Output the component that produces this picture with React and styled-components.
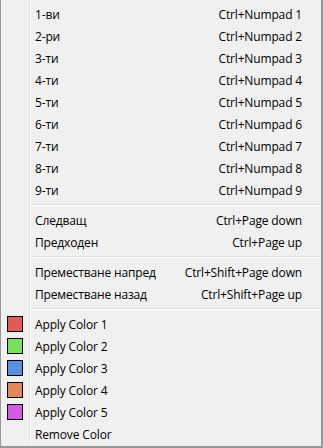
import React from 'react'
import styled, { createGlobalStyle } from 'styled-components'

const Global = createGlobalStyle`
  html, body { margin: 0; padding: 0; background: #f0f0f0; }
  body { font-family: "Open Sans", "Liberation Sans", sans-serif; }
`

const items = [
  { label: '1-ви', key: 'Ctrl+Numpad 1' },
  { label: '2-ри', key: 'Ctrl+Numpad 2' },
  { label: '3-ти', key: 'Ctrl+Numpad 3' },
  { label: '4-ти', key: 'Ctrl+Numpad 4' },
  { label: '5-ти', key: 'Ctrl+Numpad 5' },
  { label: '6-ти', key: 'Ctrl+Numpad 6' },
  { label: '7-ти', key: 'Ctrl+Numpad 7' },
  { label: '8-ти', key: 'Ctrl+Numpad 8' },
  { label: '9-ти', key: 'Ctrl+Numpad 9' },
  'sep',
  { label: 'Следващ', key: 'Ctrl+Page down' },
  { label: 'Предходен', key: 'Ctrl+Page up' },
  'sep',
  { label: 'Преместване напред', key: 'Ctrl+Shift+Page down' },
  { label: 'Преместване назад', key: 'Ctrl+Shift+Page up' },
  'sep',
  { label: 'Apply Color 1', color: '#e25b5b' },
  { label: 'Apply Color 2', color: '#78e05a' },
  { label: 'Apply Color 3', color: '#5b8fe2' },
  { label: 'Apply Color 4', color: '#e2895b' },
  { label: 'Apply Color 5', color: '#d25be2' },
  { label: 'Remove Color' },
]

export default function App() {
  return (
    <>
      <Global />
      <Menu>
        <Spacer><Gutter /></Spacer>
        {items.map((it, i) =>
          it === 'sep' ? (
            <SepRow key={i}>
              <Gutter />
              <SepLine />
            </SepRow>
          ) : (
            <Row key={i}>
              <Gutter>{it.color && <Swatch $color={it.color} />}</Gutter>
              <Label>{it.label}</Label>
              {it.key && <Shortcut>{it.key}</Shortcut>}
            </Row>
          )
        )}
      </Menu>
    </>
  )
}

const Menu = styled.div`
  width: 320px;
  height: 446px;
  background: #f0f0f0;
  border-left: 1px solid #979797;
  border-right: 2px solid #979797;
  border-bottom: 2px solid #979797;
  display: flex;
  flex-direction: column;
  color: #000;
  font-size: 12px;
  letter-spacing: -0.15px;
`

const Gutter = styled.div`
  flex: none;
  align-self: stretch;
  width: 27px;
  padding-right: 1px;
  border-right: 1px solid #e2e3e3;
  box-shadow: 1px 0 0 #ffffff;
  display: flex;
  align-items: center;
  justify-content: center;
`

const Spacer = styled.div`
  height: 3px;
  display: flex;
`

const Row = styled.div`
  height: 22px;
  display: flex;
  align-items: center;
`

const Label = styled.span`
  flex: 1;
  padding-left: 5px;
  white-space: nowrap;
`

const Shortcut = styled.span`
  padding-right: 19px;
  white-space: nowrap;
`

const SepRow = styled.div`
  height: 8px;
  display: flex;
  align-items: center;
`

const SepLine = styled.div`
  flex: 1;
  margin-left: 2px;
  height: 1px;
  background: #e0e0e0;
  border-bottom: 1px solid #ffffff;
`

const Swatch = styled.div`
  width: 14px;
  height: 14px;
  background: ${p => p.$color};
  border: 1px solid #000;
  margin-left: 1px;
`
